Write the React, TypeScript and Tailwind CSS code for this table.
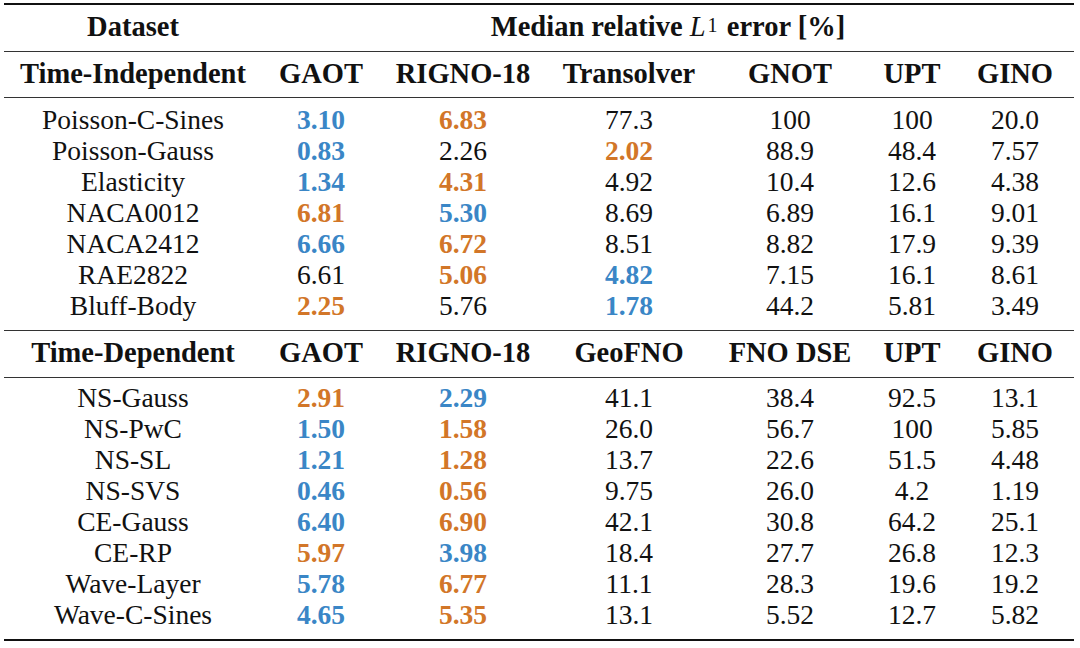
import React from 'react';

type Cell = { v: string; c?: 'b' | 'o' };

const cols = 'grid grid-cols-[258px_118px_166px_166px_156px_88px_118px]';

const indep: [string, Cell[]][] = [
  ['Poisson-C-Sines', [{ v: '3.10', c: 'b' }, { v: '6.83', c: 'o' }, { v: '77.3' }, { v: '100' }, { v: '100' }, { v: '20.0' }]],
  ['Poisson-Gauss', [{ v: '0.83', c: 'b' }, { v: '2.26' }, { v: '2.02', c: 'o' }, { v: '88.9' }, { v: '48.4' }, { v: '7.57' }]],
  ['Elasticity', [{ v: '1.34', c: 'b' }, { v: '4.31', c: 'o' }, { v: '4.92' }, { v: '10.4' }, { v: '12.6' }, { v: '4.38' }]],
  ['NACA0012', [{ v: '6.81', c: 'o' }, { v: '5.30', c: 'b' }, { v: '8.69' }, { v: '6.89' }, { v: '16.1' }, { v: '9.01' }]],
  ['NACA2412', [{ v: '6.66', c: 'b' }, { v: '6.72', c: 'o' }, { v: '8.51' }, { v: '8.82' }, { v: '17.9' }, { v: '9.39' }]],
  ['RAE2822', [{ v: '6.61' }, { v: '5.06', c: 'o' }, { v: '4.82', c: 'b' }, { v: '7.15' }, { v: '16.1' }, { v: '8.61' }]],
  ['Bluff-Body', [{ v: '2.25', c: 'o' }, { v: '5.76' }, { v: '1.78', c: 'b' }, { v: '44.2' }, { v: '5.81' }, { v: '3.49' }]],
];

const dep: [string, Cell[]][] = [
  ['NS-Gauss', [{ v: '2.91', c: 'o' }, { v: '2.29', c: 'b' }, { v: '41.1' }, { v: '38.4' }, { v: '92.5' }, { v: '13.1' }]],
  ['NS-PwC', [{ v: '1.50', c: 'b' }, { v: '1.58', c: 'o' }, { v: '26.0' }, { v: '56.7' }, { v: '100' }, { v: '5.85' }]],
  ['NS-SL', [{ v: '1.21', c: 'b' }, { v: '1.28', c: 'o' }, { v: '13.7' }, { v: '22.6' }, { v: '51.5' }, { v: '4.48' }]],
  ['NS-SVS', [{ v: '0.46', c: 'b' }, { v: '0.56', c: 'o' }, { v: '9.75' }, { v: '26.0' }, { v: '4.2' }, { v: '1.19' }]],
  ['CE-Gauss', [{ v: '6.40', c: 'b' }, { v: '6.90', c: 'o' }, { v: '42.1' }, { v: '30.8' }, { v: '64.2' }, { v: '25.1' }]],
  ['CE-RP', [{ v: '5.97', c: 'o' }, { v: '3.98', c: 'b' }, { v: '18.4' }, { v: '27.7' }, { v: '26.8' }, { v: '12.3' }]],
  ['Wave-Layer', [{ v: '5.78', c: 'b' }, { v: '6.77', c: 'o' }, { v: '11.1' }, { v: '28.3' }, { v: '19.6' }, { v: '19.2' }]],
  ['Wave-C-Sines', [{ v: '4.65', c: 'b' }, { v: '5.35', c: 'o' }, { v: '13.1' }, { v: '5.52' }, { v: '12.7' }, { v: '5.82' }]],
];

const cellClass = (c?: 'b' | 'o') =>
  c === 'b' ? 'font-bold text-[#3a86c6]' : c === 'o' ? 'font-bold text-[#d27628]' : '';

function HeadRow({ title, names, h }: { title: string; names: string[]; h: string }) {
  return (
    <div className={`${cols} ${h} items-center font-bold text-center text-[28.5px]`}>
      <div>{title}</div>
      {names.map(n => (
        <div key={n}>{n}</div>
      ))}
    </div>
  );
}

function Body({ rows }: { rows: [string, Cell[]][] }) {
  return (
    <div>
      {rows.map(([name, cells]) => (
        <div key={name} className={`${cols} h-[31px] items-center text-center leading-[31px]`}>
          <div>{name}</div>
          {cells.map((cell, i) => (
            <div key={i} className={cellClass(cell.c)}>
              {cell.v}
            </div>
          ))}
        </div>
      ))}
    </div>
  );
}

export default function App() {
  return (
    <div className="w-[1080px] h-[648px] bg-white text-[#111] pl-[4px] pr-[6px] pt-[3px] font-['Liberation_Serif',serif] text-[27.5px]">
      <div className="h-[2px] bg-[#111]" />
      <div className={`${cols} h-[46px] pb-[1px] items-center font-bold text-center text-[28.5px]`}>
        <div>Dataset</div>
        <div className="col-span-6">
          Median relative <span className="italic font-normal mr-[2px]">L</span>
          <sup className="font-normal text-[20px] relative -top-[4px] mr-[2px]">1</sup> error [%]
        </div>
      </div>
      <div className="h-px bg-[#333]" />
      <HeadRow h="h-[45px] pb-[1px]" title="Time-Independent" names={['GAOT', 'RIGNO-18', 'Transolver', 'GNOT', 'UPT', 'GINO']} />
      <div className="h-px bg-[#333]" />
      <div className="pt-[6px] pb-[9px]">
        <Body rows={indep} />
      </div>
      <div className="h-px bg-[#333]" />
      <HeadRow h="h-[46px] pb-[1px]" title="Time-Dependent" names={['GAOT', 'RIGNO-18', 'GeoFNO', 'FNO DSE', 'UPT', 'GINO']} />
      <div className="h-px bg-[#333]" />
      <div className="pt-[4px] pb-[9px]">
        <Body rows={dep} />
      </div>
      <div className="h-[2px] bg-[#111]" />
    </div>
  );
}
